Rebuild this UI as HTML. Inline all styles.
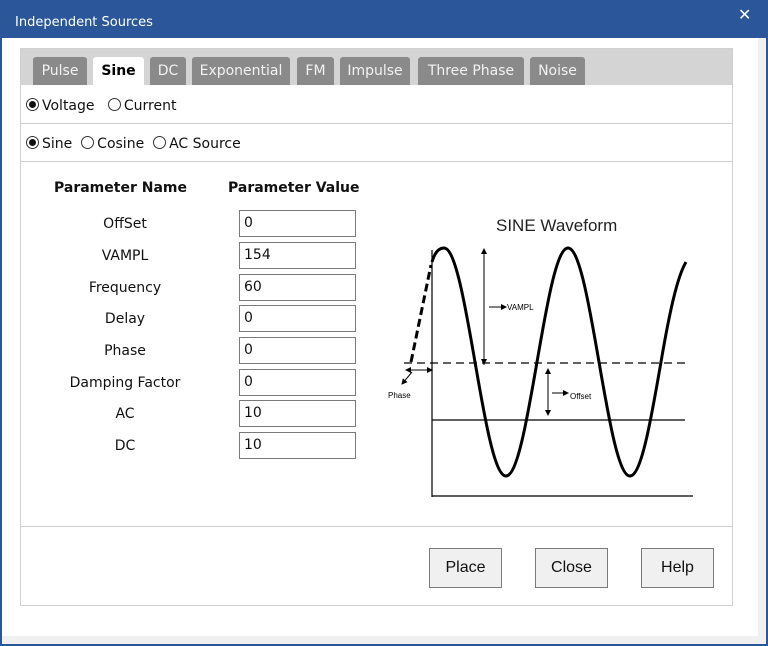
<!DOCTYPE html>
<html><head><style>
*{margin:0;padding:0;box-sizing:border-box}
body{width:768px;height:646px;background:#2b579a;position:relative;overflow:hidden;font-family:"DejaVu Sans","Liberation Sans",sans-serif;}
.win{position:absolute;left:2px;top:38px;width:764px;height:606px;background:#f0f0f0}
.inner{position:absolute;left:0;top:0;width:756px;height:598px;background:#fff}
.title{position:absolute;left:15px;top:15px;color:#fff;font-size:13px}
.x{position:absolute;left:738px;top:5px;color:#fff;font-size:16px;font-weight:bold}
.panel{position:absolute;left:20px;top:48px;width:713px;height:558px;border:1px solid #d0d0d0;background:#fff}
.strip{position:absolute;left:0;top:0;width:711px;height:36px;background:#d4d4d4}
.tab{position:absolute;top:8px;height:28px;background:#8a8a8a;color:#f2f2f2;font-size:14px;text-align:center;line-height:29px;border-radius:3px 3px 0 0;white-space:nowrap}
.tab.on{background:#fff;color:#000;font-weight:bold}
.sep{position:absolute;left:0;width:711px;height:1px;background:#cfcfcf}
.t{position:absolute;font-size:14px;color:#111;white-space:nowrap}
.r{display:inline-block;width:13px;height:13px;border:1px solid #333;border-radius:50%;vertical-align:-1px;margin-right:3px;position:relative;background:#fff}
.r.on::after{content:"";position:absolute;left:2px;top:2px;width:7px;height:7px;border-radius:50%;background:#111}
.lab{position:absolute;width:200px;left:4px;text-align:center;font-size:14px;color:#111}
.in{position:absolute;left:218px;width:117px;height:27px;border:1px solid #7a7a7a;font-size:14px;padding-left:4px;line-height:25px;color:#111}
.btn{position:absolute;top:499px;width:73px;height:40px;border:1px solid #7a7a7a;background:#f0f0f0;font-size:16px;text-align:center;line-height:38px;color:#111;font-family:"Liberation Sans",sans-serif}
</style></head><body>
<div class="title">Independent Sources</div>
<div class="x">✕</div>
<div class="win"><div class="inner"></div></div>
<div class="panel">
<div class="strip"></div>
<div class="tab" style="left:12px;width:54px">Pulse</div>
<div class="tab on" style="left:72px;width:51px">Sine</div>
<div class="tab" style="left:129px;width:36px">DC</div>
<div class="tab" style="left:171px;width:98px">Exponential</div>
<div class="tab" style="left:276px;width:37px">FM</div>
<div class="tab" style="left:319px;width:70px">Impulse</div>
<div class="tab" style="left:397px;width:106px">Three Phase</div>
<div class="tab" style="left:509px;width:55px">Noise</div>
<div class="t" style="left:5px;top:49px"><span class="r on"></span>Voltage &nbsp;&nbsp;<span class="r"></span>Current</div>
<div class="sep" style="top:74px"></div>
<div class="t" style="left:5px;top:87px"><span class="r on"></span>Sine &nbsp;<span class="r"></span>Cosine &nbsp;<span class="r"></span>AC Source</div>
<div class="sep" style="top:112px"></div>
<div class="t" style="left:33px;top:131px;font-weight:bold">Parameter Name</div>
<div class="t" style="left:207px;top:131px;font-weight:bold">Parameter Value</div>
<div class="lab" style="top:167px">OffSet</div><div class="in" style="top:161px">0</div>
<div class="lab" style="top:199px">VAMPL</div><div class="in" style="top:193px">154</div>
<div class="lab" style="top:231px">Frequency</div><div class="in" style="top:225px">60</div>
<div class="lab" style="top:262px">Delay</div><div class="in" style="top:256px">0</div>
<div class="lab" style="top:294px">Phase</div><div class="in" style="top:288px">0</div>
<div class="lab" style="top:326px">Damping Factor</div><div class="in" style="top:320px">0</div>
<div class="lab" style="top:357px">AC</div><div class="in" style="top:351px">10</div>
<div class="lab" style="top:389px">DC</div><div class="in" style="top:383px">10</div>
<div class="sep" style="top:477px"></div>
<div class="btn" style="left:408px">Place</div>
<div class="btn" style="left:514px">Close</div>
<div class="btn" style="left:620px">Help</div>
</div>
<svg style="position:absolute;left:0;top:0" width="768" height="646">
<defs><marker id="a" markerWidth="6" markerHeight="6" refX="5" refY="3" orient="auto"><path d="M0,0L6,3L0,6z" fill="#000"/></marker></defs>
<text x="496" y="231" font-family="Liberation Sans,sans-serif" font-size="17" fill="#222">SINE Waveform</text>
<line x1="432" y1="250" x2="432" y2="497" stroke="#000" stroke-width="1.2"/>
<line x1="432" y1="496" x2="693" y2="496" stroke="#000" stroke-width="1.2"/>
<line x1="432" y1="420" x2="685" y2="420" stroke="#000" stroke-width="1.2"/>
<line x1="404" y1="363" x2="685" y2="363" stroke="#000" stroke-width="1.3" stroke-dasharray="8,5"/>
<line x1="411" y1="362" x2="431" y2="265" stroke="#000" stroke-width="3" stroke-dasharray="8,4"/>
<path d="M432,262 Q436,248 444,248 c11.2,0 20.9,55.5 31,114 c10.1,58.5 19.8,114 31,114 c11.2,0 20.9,-55.5 31,-114 c10.1,-58.5 19.8,-114 31,-114 c11.2,0 20.9,55.5 31,114 c10.1,58.5 19.8,114 31,114 c11.2,0 20.9,-55.5 31,-114 c8,-47 16,-85 25,-100" fill="none" stroke="#000" stroke-width="3"/>
<line x1="484" y1="250" x2="484" y2="364" stroke="#000" marker-end="url(#a)"/>
<line x1="484" y1="365" x2="484" y2="249" stroke="#000" marker-end="url(#a)"/>
<line x1="489" y1="307" x2="506" y2="307" stroke="#000" marker-end="url(#a)"/>
<text x="507" y="310" font-size="8" font-family="Liberation Sans,sans-serif">VAMPL</text>
<line x1="548" y1="372" x2="548" y2="415" stroke="#000" marker-end="url(#a)"/>
<line x1="548" y1="410" x2="548" y2="369" stroke="#000" marker-end="url(#a)"/>
<line x1="552" y1="393" x2="568" y2="393" stroke="#000" marker-end="url(#a)"/>
<text x="570" y="399" font-size="8" font-family="Liberation Sans,sans-serif">Offset</text>
<line x1="410" y1="370" x2="432" y2="370" stroke="#000" marker-end="url(#a)"/>
<line x1="420" y1="370" x2="406" y2="370" stroke="#000" marker-end="url(#a)"/>
<line x1="412" y1="372" x2="402" y2="384" stroke="#000" marker-end="url(#a)"/>
<text x="388" y="398" font-size="8" font-family="Liberation Sans,sans-serif">Phase</text>
</svg>
</body></html>
